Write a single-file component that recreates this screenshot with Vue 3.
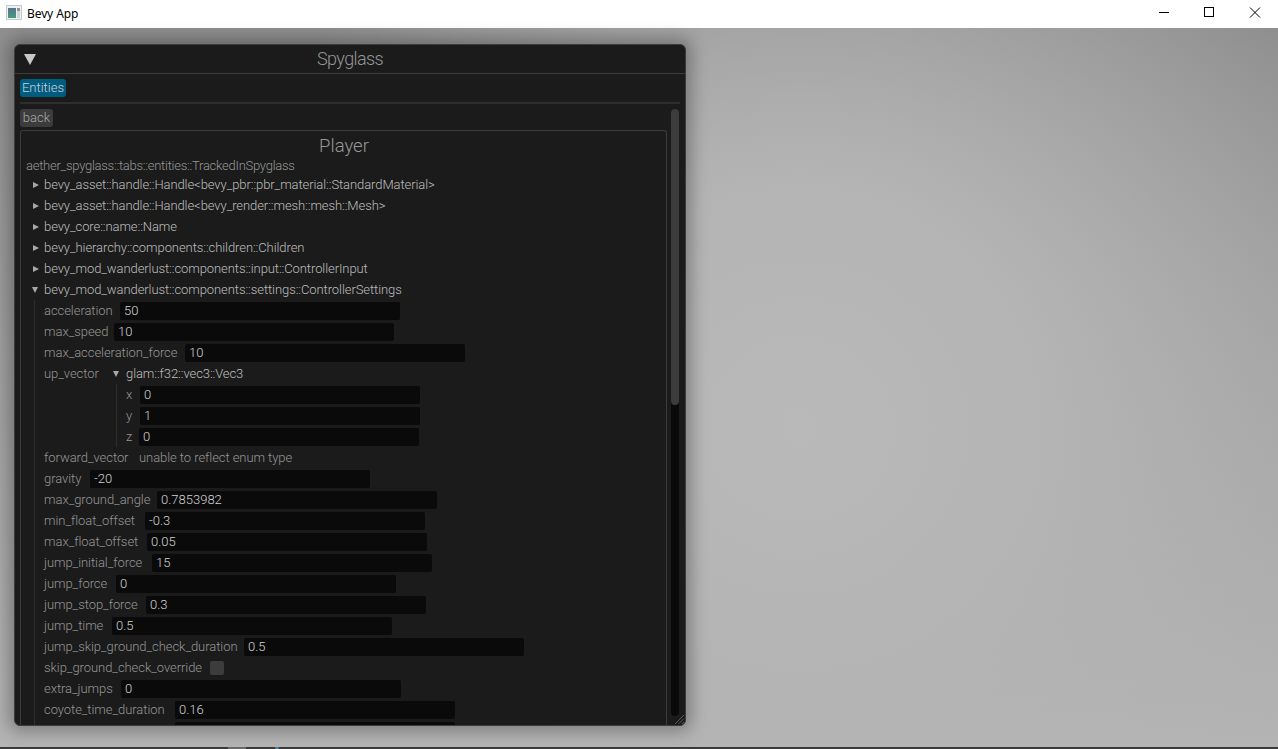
<script setup>
const collapsed = [
  'bevy_asset::handle::Handle<bevy_pbr::pbr_material::StandardMaterial>',
  'bevy_asset::handle::Handle<bevy_render::mesh::mesh::Mesh>',
  'bevy_core::name::Name',
  'bevy_hierarchy::components::children::Children',
  'bevy_mod_wanderlust::components::input::ControllerInput',
]
const before = [
  { name: 'acceleration', x: 120, value: '50' },
  { name: 'max_speed', x: 114, value: '10' },
  { name: 'max_acceleration_force', x: 185, value: '10' },
]
const vec = [
  { name: 'x', w: 6, value: '0' },
  { name: 'y', w: 6, value: '1' },
  { name: 'z', w: 5, value: '0' },
]
const after = [
  { name: 'gravity', x: 90, value: '-20' },
  { name: 'max_ground_angle', x: 157, value: '0.7853982' },
  { name: 'min_float_offset', x: 145, value: '-0.3' },
  { name: 'max_float_offset', x: 147, value: '0.05' },
  { name: 'jump_initial_force', x: 152, value: '15' },
  { name: 'jump_force', x: 116, value: '0' },
  { name: 'jump_stop_force', x: 146, value: '0.3' },
  { name: 'jump_time', x: 112, value: '0.5' },
  { name: 'jump_skip_ground_check_duration', x: 244, value: '0.5' },
  { name: 'skip_ground_check_override', x: 0, check: true },
  { name: 'extra_jumps', x: 121, value: '0' },
  { name: 'coyote_time_duration', x: 175, value: '0.16' },
  { name: '', x: 175, value: '' },
]
const labelW = (r) => ({ width: r.x - 52 + 'px' })
const axisW = (v) => ({ width: v.w + 'px' })
</script>

<template>
  <div class="app">
    <header class="os-bar">
      <div class="os-title">
        <svg class="app-icon" width="16" height="16" viewBox="0 0 16 16">
          <defs>
            <linearGradient id="pane" x1="0" y1="0" x2="0" y2="1">
              <stop offset="0" stop-color="#56748c" />
              <stop offset="1" stop-color="#4a9a80" />
            </linearGradient>
          </defs>
          <rect x="0.5" y="0.5" width="15" height="14" fill="#eef1f1" stroke="#c6c9c9" />
          <rect x="2" y="3" width="8" height="10" fill="url(#pane)" />
          <rect x="11" y="3" width="3" height="3" fill="#8d9496" />
          <rect x="11" y="6" width="3" height="7" fill="#cfd4d4" />
        </svg>
        <span>Bevy App</span>
      </div>
      <div class="os-controls">
        <svg width="46" height="28" viewBox="0 0 46 28"><path d="M19 12.5h10" stroke="#000" fill="none" /></svg>
        <svg width="46" height="28" viewBox="0 0 46 28"><rect x="18.5" y="7.5" width="9" height="9" stroke="#000" fill="none" /></svg>
        <svg width="46" height="28" viewBox="0 0 46 28"><path d="M18 7.5l10 10M28 7.5l-10 10" stroke="#000" fill="none" /></svg>
      </div>
    </header>

    <main class="scene">
      <section class="window">
        <div class="title-bar">
          <svg class="collapse" width="12" height="11" viewBox="0 0 12 11"><path d="M0 0h12L6 11z" fill="#c8c8c8" /></svg>
          <span class="win-title">Spyglass</span>
        </div>
        <div class="tabs"><button class="tab">Entities</button></div>
        <div class="rule"></div>
        <div class="scroll">
          <div class="content">
            <button class="back">back</button>
            <div class="group">
              <h2 class="player">Player</h2>
              <div class="crate">aether_spyglass::tabs::entities::TrackedInSpyglass</div>
              <div v-for="c in collapsed" :key="c" class="node">
                <span class="tri right"></span><span class="strong">{{ c }}</span>
              </div>
              <div class="node">
                <span class="tri down"></span><span class="strong">bevy_mod_wanderlust::components::settings::ControllerSettings</span>
              </div>
              <div class="fields">
                <div v-for="r in before" :key="r.name" class="row">
                  <span class="label" :style="labelW(r)">{{ r.name }}</span>
                  <span class="input">{{ r.value }}</span>
                </div>
                <div class="row">
                  <span class="label up">up_vector</span>
                  <span class="tri down"></span><span class="strong">glam::f32::vec3::Vec3</span>
                </div>
                <div class="vec">
                  <div v-for="v in vec" :key="v.name" class="row">
                    <span class="label" :style="axisW(v)">{{ v.name }}</span>
                    <span class="input">{{ v.value }}</span>
                  </div>
                </div>
                <div class="row">
                  <span class="label fv">forward_vector</span>
                  <span class="label">unable to reflect enum type</span>
                </div>
                <div v-for="r in after" :key="r.name" class="row">
                  <template v-if="r.check">
                    <span class="label chk">{{ r.name }}</span>
                    <span class="checkbox"></span>
                  </template>
                  <template v-else>
                    <span class="label" :style="labelW(r)">{{ r.name }}</span>
                    <span class="input">{{ r.value }}</span>
                  </template>
                </div>
              </div>
            </div>
          </div>
          <div class="scrollbar"><div class="thumb"></div></div>
        </div>
        <svg class="grip" width="12" height="12" viewBox="0 0 12 12">
          <path d="M11 2L2 11M11 5.5L5.5 11M11 9L9 11" stroke="#5a5a5a" fill="none" />
        </svg>
      </section>
    </main>
    <div class="bottom-edge"></div>
  </div>
</template>

<style>
html, body { margin: 0; overflow: hidden; }
</style>

<style scoped>
.app {
  width: 1278px;
  height: 749px;
  display: flex;
  flex-direction: column;
  overflow: hidden;
  font-family: Roboto, "Noto Sans", sans-serif;
  font-weight: 300;
  font-size: 13px;
  color: #969696;
}
.os-bar {
  height: 28px;
  flex: none;
  background: #fff;
  display: flex;
  justify-content: space-between;
  align-items: center;
}
.os-title {
  display: flex;
  align-items: center;
  gap: 5px;
  padding: 0 0 2px 6px;
  color: #000;
  font: 12px "Noto Sans", sans-serif;
  letter-spacing: -0.1px;
}
.app-icon { display: block; }
.os-controls { display: flex; align-self: flex-start; }
.os-controls svg { display: block; }
.scene {
  flex: 1;
  min-height: 0;
  padding: 16px 0 0 14px;
  background:
    radial-gradient(ellipse 620px 620px at 800px 400px, #b9b9b9 0%, #b4b4b4 40%, rgba(170,170,170,0) 100%),
    linear-gradient(180deg, #8f8f8f 0%, #a5a5a5 60%, #b4b4b4 100%);
}
.window {
  position: relative;
  box-sizing: border-box;
  width: 672px;
  height: 682px;
  background: #1b1b1b;
  border: 1px solid #3c3c3c;
  border-radius: 6px;
  box-shadow: 0 0 16px 6px rgba(0, 0, 0, 0.28);
  overflow: hidden;
  display: flex;
  flex-direction: column;
}
.title-bar {
  height: 29px;
  flex: none;
  box-sizing: border-box;
  border-bottom: 1px solid #3c3c3c;
  position: relative;
  display: flex;
  align-items: center;
  justify-content: center;
}
.collapse { position: absolute; left: 9px; top: 9px; }
.win-title { font-size: 18px; letter-spacing: -0.6px; color: #969696; line-height: 26px; }
.tabs {
  flex: none;
  padding: 5px 5px 0;
  height: 23px;
  box-sizing: content-box;
}
.tab {
  display: block;
  width: 46px;
  height: 18px;
  padding: 0 0 1px;
  border: none;
  border-radius: 3px;
  background: #005c80;
  color: #d2d2d2;
  font: inherit;
}
.rule {
  height: 2px;
  margin: 0 5px;
  background: #2e2e2e;
  flex: none;
}
.scroll {
  flex: 1;
  min-height: 0;
  display: flex;
  padding: 5px 5px 0;
}
.content {
  width: 647px;
  flex: none;
}
.back {
  display: block;
  width: 33px;
  height: 18px;
  padding: 0 0 1px;
  border: none;
  border-radius: 3px;
  background: #3c3c3c;
  color: #a8a8a8;
  font: inherit;
}
.group {
  margin-top: 3px;
  box-sizing: border-box;
  height: 620px;
  border: 1px solid #3c3c3c;
  border-bottom: none;
  border-radius: 3px 3px 0 0;
  padding-left: 5px;
  overflow: hidden;
}
.player {
  margin: 0;
  height: 28px;
  font-size: 18.5px;
  font-weight: 300;
  line-height: 30px;
  text-align: center;
  padding-right: 4px;
  color: #969696;
}
.crate { height: 15px; line-height: 13px; letter-spacing: -0.26px; }
.node, .row {
  height: 21px;
  display: flex;
  align-items: center;
  white-space: nowrap;
}
.strong { color: #bebebe; letter-spacing: -0.08px; }
.node { padding-left: 6px; }
.tri {
  width: 12px;
  flex: none;
  display: flex;
  justify-content: flex-start;
}
.tri::before { content: ""; display: block; border-style: solid; border-color: transparent; }
.tri.right::before { margin-left: 1px; border-width: 3.5px 0 3.5px 6px; border-left-color: #a8a8a8; }
.tri.down::before { border-width: 6px 3.5px 0; border-top-color: #a8a8a8; }
.row .tri { width: 13px; }
.fields {
  margin-left: 8px;
  padding-left: 9px;
  border-left: 1px solid #2e2e2e;
  height: 430px;
}
.label { flex: none; letter-spacing: -0.06px; }
.input {
  width: 280px;
  height: 18px;
  margin-left: 8px;
  box-sizing: border-box;
  padding-left: 4px;
  background: #0a0a0a;
  border-radius: 2px;
  color: #d2d2d2;
  line-height: 17px;
}
.up { width: 69px; }
.vec {
  margin-left: 72px;
  padding-left: 9px;
  border-left: 1px solid #2e2e2e;
}
.fv { width: 95px; }
.chk { width: 166px; }
.checkbox {
  width: 14px;
  height: 14px;
  background: #3c3c3c;
  border-radius: 2px;
}
.scrollbar {
  width: 8px;
  margin-left: 4px;
  background: #0a0a0a;
  border-radius: 4px;
  height: 607px;
  flex: none;
}
.thumb {
  height: 296px;
  background: #3c3c3c;
  border-radius: 4px;
}
.grip { position: absolute; right: 0; bottom: 0; }
.bottom-edge {
  height: 2px;
  flex: none;
  background:
    linear-gradient(90deg, transparent 228px, #6a6a6a 228px, #6a6a6a 246px, transparent 246px),
    linear-gradient(90deg, transparent 275px, #55768c 275px, #55768c 279px, transparent 279px),
    #3a3a3a;
}
</style>
